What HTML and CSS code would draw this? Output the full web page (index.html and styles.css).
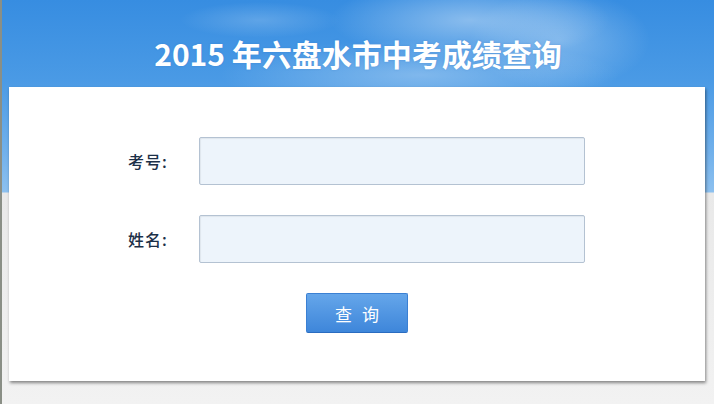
FILE: index.html
```html
<!DOCTYPE html>
<html lang="zh-CN">
<head>
<meta charset="utf-8">
<title>2015 年六盘水市中考成绩查询</title>
<link rel="stylesheet" href="styles.css">
</head>
<body>
<div class="page">
  <header class="header">
    <h1 class="title">2015 年六盘水市中考成绩查询</h1>
  </header>
  <main class="card">
    <form class="form">
      <div class="row">
        <label class="label" for="kh">考号:</label>
        <input class="input" id="kh" type="text">
      </div>
      <div class="row">
        <label class="label" for="xm">姓名:</label>
        <input class="input" id="xm" type="text">
      </div>
      <div class="actions">
        <button class="btn" type="button">查 询</button>
      </div>
    </form>
  </main>
</div>
</body>
</html>
```
FILE: styles.css
```css
html, body {
  margin: 0;
  padding: 0;
  height: 100%;
}
body {
  font-family: "Noto Sans CJK SC", "Liberation Sans", sans-serif;
  background-color: #efefef;
  background-image:
    radial-gradient(ellipse 140px 40px at 470px 20px, rgba(255,255,255,0.4), rgba(255,255,255,0) 100%),
    radial-gradient(ellipse 90px 50px at 560px 40px, rgba(255,255,255,0.3), rgba(255,255,255,0) 100%),
    radial-gradient(ellipse 200px 35px at 420px 75px, rgba(255,255,255,0.3), rgba(255,255,255,0) 100%),
    radial-gradient(ellipse 80px 18px at 260px 20px, rgba(255,255,255,0.18), rgba(255,255,255,0) 100%),
    linear-gradient(to bottom, #378de1 0px, #4a9ae5 80px, #70b0eb 150px, #8cc0ef 192px, #e9e9e9 193px, #f2f2f2 404px);
  background-repeat: no-repeat;
  border-left: 2px solid #8a8f86;
  box-sizing: border-box;
}
.page {
  display: flex;
  flex-direction: column;
  align-items: center;
  margin-left: -2px;
}
.header {
  height: 87px;
  display: flex;
  align-items: center;
  justify-content: center;
  width: 100%;
}
.title {
  margin: 0;
  padding-top: 18px;
  padding-left: 2px;
  color: #ffffff;
  font-size: 30px;
  font-weight: 700;
  line-height: 1;
  text-shadow: 0 0 2px rgba(40,100,180,0.3);
}
.card {
  width: 696px;
  height: 294px;
  background: #ffffff;
  box-shadow: 1px 2px 3px rgba(0,0,0,0.45);
  box-sizing: border-box;
  padding-top: 50px;
}
.form {
  display: flex;
  flex-direction: column;
  gap: 30px;
}
.row {
  display: grid;
  grid-template-columns: 71px 386px;
  padding-left: 119px;
  align-items: center;
}
.label {
  font-family: "Noto Sans CJK SC", sans-serif;
  font-size: 16px;
  font-weight: 500;
  color: #1c3048;
  letter-spacing: 1px;
}
.input {
  width: 386px;
  height: 48px;
  box-sizing: border-box;
  border: 1px solid #b4c2d2;
  border-radius: 2px;
  background: #edf4fb;
  box-shadow: inset 1px 1px 1px rgba(0,0,0,0.06);
  margin: 0;
}
.actions {
  display: flex;
  justify-content: center;
}
.btn {
  width: 102px;
  height: 40px;
  border: 1px solid #3b80d3;
  border-bottom-color: #2a6cc0;
  border-radius: 2px;
  background: linear-gradient(to bottom, #65a6ea, #3e86da);
  color: #ffffff;
  font-family: "Noto Sans CJK SC", sans-serif;
  font-size: 17px;
  letter-spacing: 3px;
  padding: 0 0 0 3px;
  cursor: pointer;
}
```
